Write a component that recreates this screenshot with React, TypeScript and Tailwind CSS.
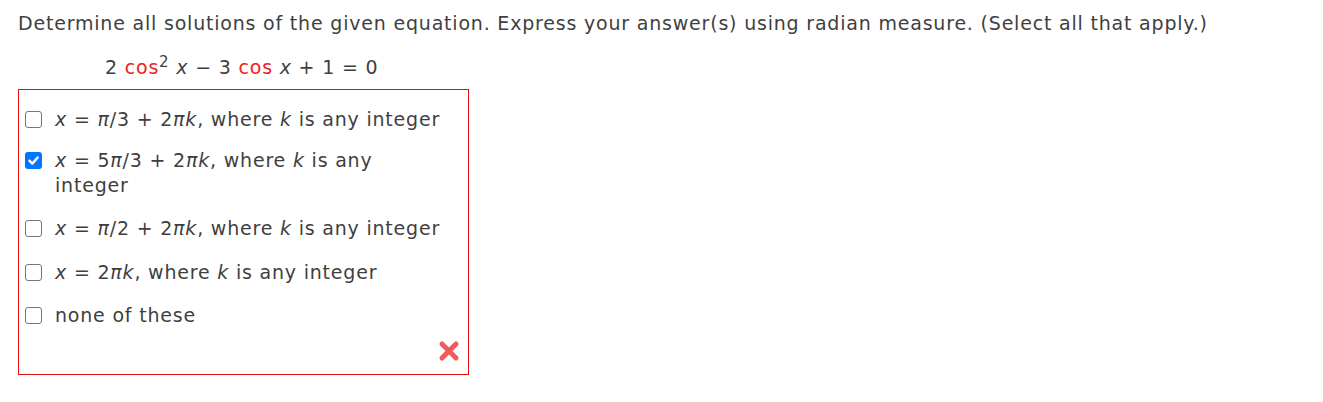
import React from "react";

const Box = ({ checked }: { checked?: boolean }) =>
  checked ? (
    <span className="mt-[4px] flex h-[17px] w-[17px] shrink-0 items-center justify-center rounded-[3px] bg-[#0075ff]">
      <svg width="13" height="13" viewBox="0 0 12 12">
        <path d="M2.2 6.2 L4.9 8.9 L9.9 3.2" fill="none" stroke="white" strokeWidth="2.2" strokeLinecap="round" strokeLinejoin="round" />
      </svg>
    </span>
  ) : (
    <span className="mt-[4px] h-[17px] w-[17px] shrink-0 rounded-[3px] border-[1.5px] border-[#767676] bg-white" />
  );

const I = ({ children }: { children: React.ReactNode }) => <span className="italic">{children}</span>;

const Row = ({ checked, children, className = "" }: { checked?: boolean; children: React.ReactNode; className?: string }) => (
  <div className={"flex items-start gap-[13px] " + className}>
    <Box checked={checked} />
    <div className="leading-[25px]">{children}</div>
  </div>
);

export default function App() {
  return (
    <div
      className="min-h-[402px] w-[1323px] bg-white pl-[18px] pt-[10px] text-[19px] tracking-[0.8px] text-[#3f3f3f]"
      style={{ fontFamily: '"DejaVu Sans", Verdana, sans-serif' }}
    >
      <div className="whitespace-nowrap leading-[26px]">
        Determine all solutions of the given equation. Express your answer(s) using radian measure. (Select all that apply.)
      </div>
      <div className="mt-[18px] pl-[87px] leading-[26px]">
        2 <span className="text-[#ee2222]">cos</span>
        <sup className="text-[15px]">2</sup> <I>x</I> − 3 <span className="text-[#ee2222]">cos</span> <I>x</I> + 1 = 0
      </div>
      <div className="mt-[9px] flex w-[451px] flex-col gap-[18px] border border-[#e01010] pb-[12px] pl-[6px] pr-[14px] pt-[17px]">
        <Row>
          <I>x</I> = <I>π</I>/3 + 2<I>πk</I>, where <I>k</I> is any integer
        </Row>
        <Row checked className="-mt-[2px]">
          <I>x</I> = 5<I>π</I>/3 + 2<I>πk</I>, where <I>k</I> is any
          <br />
          integer
        </Row>
        <Row>
          <I>x</I> = <I>π</I>/2 + 2<I>πk</I>, where <I>k</I> is any integer
        </Row>
        <Row className="mt-[1px]">
          <I>x</I> = 2<I>πk</I>, where <I>k</I> is any integer
        </Row>
        <Row>none of these</Row>
        <div className="-mr-[6px] -mt-[6px] flex justify-end">
          <svg width="22" height="22" viewBox="0 0 22 22">
            <path d="M4 4 L18 18 M18 4 L4 18" stroke="#f05a5a" strokeWidth="5" strokeLinecap="round" />
          </svg>
        </div>
      </div>
    </div>
  );
}
